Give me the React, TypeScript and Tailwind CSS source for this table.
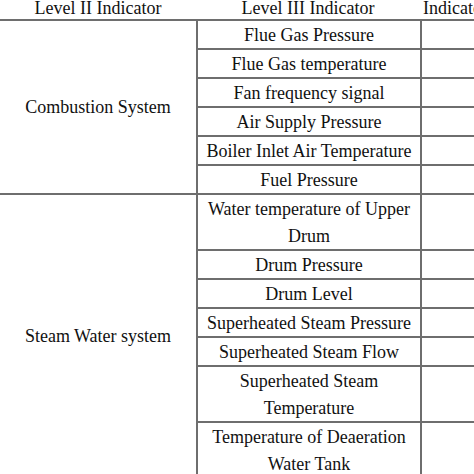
import React from "react";

type Row = { lines: string[] };

const group1: Row[] = [
  { lines: ["Flue Gas Pressure"] },
  { lines: ["Flue Gas temperature"] },
  { lines: ["Fan frequency signal"] },
  { lines: ["Air Supply Pressure"] },
  { lines: ["Boiler Inlet Air Temperature"] },
  { lines: ["Fuel Pressure"] },
];

const group2: Row[] = [
  { lines: ["Water temperature of Upper", "Drum"] },
  { lines: ["Drum Pressure"] },
  { lines: ["Drum Level"] },
  { lines: ["Superheated Steam Pressure"] },
  { lines: ["Superheated Steam Flow"] },
  { lines: ["Superheated Steam", "Temperature"] },
  { lines: ["Temperature of Deaeration", "Water Tank"] },
];

function Group({ name, rows }: { name: string; rows: Row[] }) {
  return (
    <div className="flex border-b-2 border-[#6e6e6e]">
      <div className="w-[196px] shrink-0 flex items-center justify-center whitespace-nowrap">
        {name}
      </div>
      <div className="flex flex-col border-l-2 border-[#6e6e6e] flex-1">
        {rows.map((r, i) => (
          <div
            key={i}
            className={
              i < rows.length - 1
                ? "flex border-b-2 border-[#6e6e6e]"
                : "flex"
            }
          >
            <div className="w-[222px] shrink-0 text-center leading-[27px] whitespace-nowrap">
              <div className="relative top-[1px]">
                {r.lines.map((l, j) => (
                  <div key={j}>{l}</div>
                ))}
              </div>
            </div>
            <div className="flex-1 border-l-2 border-[#6e6e6e]" />
          </div>
        ))}
      </div>
    </div>
  );
}

export default function App() {
  return (
    <div
      className="w-[474px] h-[474px] overflow-hidden bg-white text-[18px] text-[#111111]"
      style={{ fontFamily: '"Liberation Serif", "Times New Roman", serif' }}
    >
      <div className="w-[600px]">
        <div className="flex h-[21px] border-b-2 border-[#6e6e6e] leading-[16px]">
          <div className="w-[196px] shrink-0 text-center whitespace-nowrap">
            Level II Indicator
          </div>
          <div className="w-[224px] shrink-0 text-center whitespace-nowrap">
            Level III Indicator
          </div>
          <div className="flex-1 pl-[3px] whitespace-nowrap">Indicator Weight</div>
        </div>
        <Group name="Combustion System" rows={group1} />
        <Group name="Steam Water system" rows={group2} />
      </div>
    </div>
  );
}
